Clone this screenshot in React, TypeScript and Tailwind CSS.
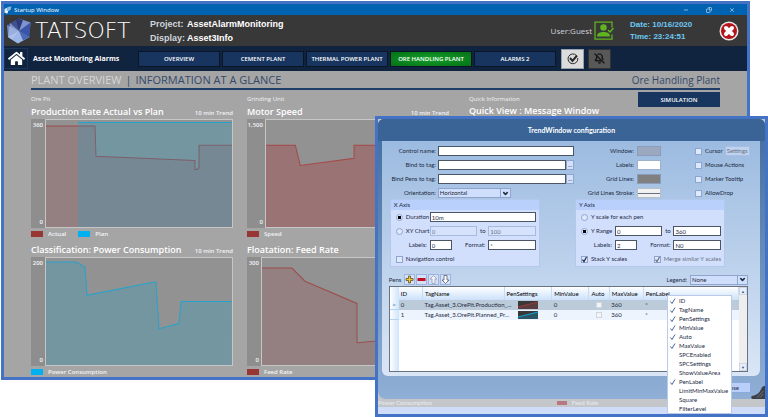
import React from "react";
import { FaHome } from "react-icons/fa";
import { BellOff, ChevronDown, Minus, Copy, X } from "lucide-react";

const tabs = ["OVERVIEW", "CEMENT PLANT", "THERMAL POWER PLANT", "ORE HANDLING PLANT", "ALARMS 2"];

const pens = [
  { id: "0", tag: "Tag.Asset_3.OrePit.Production_...", min: "0", max: "360", label: "*", line: "#9c3a3a", fill: "#5a3c3c" },
  { id: "1", tag: "Tag.Asset_3.OrePit.Planned_Pr...", min: "0", max: "360", label: "*", line: "#12a5dc", fill: "#2b5562" },
];

const menuItems = [
  { name: "ID", on: true },
  { name: "TagName", on: true },
  { name: "PenSettings", on: true },
  { name: "MinValue", on: true },
  { name: "Auto", on: true },
  { name: "MaxValue", on: true },
  { name: "SPCEnabled", on: false },
  { name: "SPCSettings", on: false },
  { name: "ShowValueArea", on: false },
  { name: "PenLabel", on: true },
  { name: "LimitMinMaxValue", on: false },
  { name: "Square", on: false },
  { name: "FilterLevel", on: false },
];

interface Series {
  points: string;
  color: string;
  opacity: number;
}

interface TrendProps {
  title: string;
  max: string;
  wideAxis?: boolean;
  series: Series[];
  legend: { name: string; color: string }[];
}

// points run left to right in a 186 x 106 plot, the area below is closed to the bottom edge
function areaOf(points: string) {
  const list = points.split(" ");
  const firstX = list[0].split(",")[0];
  const lastX = list[list.length - 1].split(",")[0];
  return `${firstX},106 ${points} ${lastX},106`;
}

function Trend({ title, max, wideAxis, series, legend }: TrendProps) {
  return (
    <section>
      <div className="flex h-4 items-center justify-between whitespace-nowrap">
        <h3 className="text-[9px] leading-none font-semibold text-white">{title}</h3>
        <span className="pt-1 text-[6px] leading-none font-semibold text-gray-100">10 min Trend</span>
      </div>
      <div className="flex h-[109px]">
        <div className={`flex flex-col items-end justify-between bg-[#8e8e8e] py-[2px] pr-[2px] text-[6px] leading-[8px] font-semibold text-gray-100 ${wideAxis ? "w-[18px]" : "w-[14px]"}`}>
          <span>{max}</span>
          <span>0</span>
        </div>
        <div className="min-w-0 flex-1 border border-[#c6c6c6] bg-[#929292]">
          <svg className="block h-full w-full" viewBox="0 0 186 106" preserveAspectRatio="none">
            {series.map((s) => (
              <g key={s.color}>
                <polygon points={areaOf(s.points)} fill={s.color} fillOpacity={s.opacity} />
                <polyline points={s.points} fill="none" stroke={s.color} strokeOpacity="0.7" strokeWidth="1" />
              </g>
            ))}
          </svg>
        </div>
      </div>
      <div className="flex h-[11px] items-center gap-3 text-[6px] leading-none font-semibold text-gray-100">
        {legend.map((item) => (
          <span key={item.name} className="flex items-center gap-[5px]">
            <i className="h-[6px] w-3" style={{ background: item.color }} />
            {item.name}
          </span>
        ))}
      </div>
    </section>
  );
}

function Logo() {
  return (
    <svg className="h-[26px] w-[25px] shrink-0" viewBox="0 0 50 52">
      <polygon points="26,26 2,14 20,4 26,1" fill="#41518f" />
      <polygon points="26,1 49,9 47,30 26,26" fill="#7d93cf" />
      <polygon points="2,14 26,26 22,50 4,38" fill="#6f8dcb" />
      <polygon points="26,26 47,38 24,51 4,38" fill="#9db6e8" />
      <polygon points="26,26 49,9 47,38" fill="#3a55a8" />
      <polygon points="8,10 26,26 12,43 4,38" fill="#b9cbee" opacity="0.55" />
      <polygon points="26,26 47,38 34,45" fill="#4d68b4" />
      <polygon points="26,1 34,4 26,26 20,4" fill="#2c3b78" />
    </svg>
  );
}

function UserIcon() {
  return (
    <svg className="h-[19px] w-[20px]" viewBox="0 0 40 38" fill="none" stroke="#5fb41f" strokeWidth="2.5">
      <path d="M36 13V2H2v34h34V27" />
      <circle cx="19" cy="13" r="6.5" fill="#5fb41f" stroke="none" />
      <path d="M6 31c0-7 6-9 13-9s13 2 13 9z" fill="#5fb41f" stroke="none" />
      <path d="M28 18l4 4 7-8" strokeWidth="3" />
    </svg>
  );
}

function ExitIcon() {
  return (
    <svg className="h-5 w-5" viewBox="0 0 40 40">
      <circle cx="20" cy="20" r="19" fill="#e8e8e8" />
      <circle cx="20" cy="20" r="16" fill="#b3151b" />
      <path d="M14 14l12 12M26 14L14 26" stroke="#fff" strokeWidth="8" strokeLinecap="round" />
    </svg>
  );
}

function AckIcon() {
  return (
    <svg className="h-3 w-3" viewBox="0 0 24 24" fill="none" stroke="#2b2b2b">
      <path d="M19 5a9.8 9.8 0 1 0 2.500 5" strokeWidth="2" />
      <path d="M6 10l5 6L20 5" strokeWidth="4" />
    </svg>
  );
}

function MainWindow() {
  return (
    <div className="mt-px mr-[18px] ml-px border-3 border-[#4472c4] bg-[#a5a5a5] font-['Open_Sans',sans-serif]">
      <div className="flex h-[11px] items-center gap-[2px] bg-[#0063b1] pr-3 text-white">
        <svg className="h-[8px] w-[8px]" viewBox="0 0 16 16">
          <path d="M1 6l6-3v9l-6 2z" fill="#cfe3f7" />
          <path d="M7 2l8-1-2 7-6 3z" fill="#8cb9e4" />
          <path d="M3 9l5 1-1 5-4-1z" fill="#fff" />
        </svg>
        <span className="text-[6px] leading-none">Startup Window</span>
        <div className="ml-auto flex items-center gap-[17px]">
          <button aria-label="Minimize"><Minus className="size-[6px]" /></button>
          <button aria-label="Restore"><Copy className="size-[6px] -scale-x-100" /></button>
          <button aria-label="Close window"><X className="size-[6px]" /></button>
        </div>
      </div>

      <header className="flex h-[31px] items-center bg-[#383838] pr-2 pl-[2px]">
        <Logo />
        <span className="ml-1 w-[115px] font-['DejaVu_Sans',sans-serif] text-[22px] leading-none font-extralight text-white">TATSOFT</span>
        <dl className="grid grid-cols-[auto_1fr] gap-x-[2px] font-['Liberation_Sans',sans-serif] text-[9px] leading-[14px] font-bold whitespace-nowrap text-white">
          <dt className="text-gray-300">Project:</dt>
          <dd>AssetAlarmMonitoring</dd>
          <dt className="text-gray-300">Display:</dt>
          <dd>Asset3Info</dd>
        </dl>
        <div className="ml-auto flex items-center gap-[2px]">
          <span className="text-[8px] leading-none text-gray-300">User:Guest</span>
          <UserIcon />
        </div>
        <div className="ml-4 w-[89px] font-['Liberation_Sans',sans-serif] text-[8px] leading-[12px] font-bold text-[#6cc8f4]">
          <p>Date: 10/16/2020</p>
          <p>Time: 23:24:51</p>
        </div>
        <button aria-label="Exit"><ExitIcon /></button>
      </header>

      <nav className="flex h-[25px] items-center bg-[#10233f] text-white">
        <button aria-label="Home" className="flex h-[21px] w-6 items-center justify-center border border-[#1b3556]">
          <FaHome className="size-[17px]" />
        </button>
        <span className="ml-[5px] w-[105px] text-[7px] leading-none font-bold whitespace-nowrap">Asset Monitoring Alarms</span>
        <div className="flex gap-[2px]">
          {tabs.map((tab) => (
            <button
              key={tab}
              className={`h-4 w-[82px] border border-[#0a1526] text-[6px] leading-none font-semibold whitespace-nowrap ${tab === "ORE HANDLING PLANT" ? "bg-radial from-[#13a02c] to-[#067015]" : "bg-[#17355e]"}`}
            >
              {tab}
            </button>
          ))}
        </div>
        <button aria-label="Acknowledge alarms" className="ml-[5px] flex h-5 w-[23px] items-center justify-center border border-gray-400 bg-[#dcdcdc]">
          <AckIcon />
        </button>
        <button aria-label="Mute alarms" className="ml-1 flex h-5 w-[23px] items-center justify-center border border-[#333] bg-[#585858] text-[#181818]">
          <BellOff className="size-[11px]" strokeWidth={3} />
        </button>
      </nav>

      <main className="px-[27px]">
        <div className="flex h-[19px] items-center justify-between border-b-2 border-[#1f3d66] whitespace-nowrap text-[#34496a]">
          <h1 className="flex gap-1 text-[11px] leading-none">
            <span className="text-[#d6d6d6]">PLANT OVERVIEW</span>
            <span>|</span>
            <span>INFORMATION AT A GLANCE</span>
          </h1>
          <h2 className="text-[10px] leading-none">Ore Handling Plant</h2>
        </div>

        <div className="grid grid-cols-[11fr_11fr_14fr] gap-x-3.5">
          <div>
            <p className="pt-[5px] text-[6px] leading-[8px] text-gray-100">Ore Pit</p>
            <div className="flex flex-col gap-[2px]">
              <Trend
                title="Production Rate Actual vs Plan"
                max="360"
                series={[
                  { points: "0,6 49,6 50,36 149,40 149,49 151,49 153,47 153,25 186,25", color: "#a03434", opacity: 0.18 },
                  { points: "32,2.5 186,2.5", color: "#00a8e0", opacity: 0.2 },
                ]}
                legend={[{ name: "Actual", color: "#983535" }, { name: "Plan", color: "#00b0f0" }]}
              />
              <Trend
                title="Classification: Power Consumption"
                max="200"
                series={[{ points: "0,4 30,4 39,9 41,37 107,24 110,24 113,70 133,65 135,43 186,43", color: "#00a8e0", opacity: 0.2 }]}
                legend={[{ name: "Power Consumption", color: "#00b0f0" }]}
              />
            </div>
          </div>
          <div>
            <p className="pt-[5px] text-[6px] leading-[8px] text-gray-100">Grinding Unit</p>
            <div className="flex flex-col gap-[2px]">
              <Trend
                title="Motor Speed"
                max="1,500"
                wideAxis
                series={[{ points: "0,25 30,25 35,45 90,38 90,25 186,25", color: "#ad2f2f", opacity: 0.3 }]}
                legend={[{ name: "Speed", color: "#983535" }]}
              />
              <Trend
                title="Floatation: Feed Rate"
                max="300"
                series={[{ points: "0,10 30,10 43,23 95,45 95,84 186,76", color: "#a03434", opacity: 0.18 }]}
                legend={[{ name: "Feed Rate", color: "#983535" }]}
              />
            </div>
          </div>
          <div className="flex items-start justify-between pl-[6px] whitespace-nowrap">
            <div>
              <p className="pt-[5px] text-[6px] leading-[8px] text-gray-100">Quick Information</p>
              <h3 className="text-[9px] leading-4 font-semibold text-white">Quick View : Message Window</h3>
            </div>
            <button className="mt-[2px] h-[15px] w-[82px] bg-[#17355e] text-[6px] leading-none font-semibold text-white">SIMULATION</button>
          </div>
        </div>
      </main>
    </div>
  );
}

const inputStyle = "h-[10px] min-w-0 border border-gray-600 bg-white px-px leading-none disabled:border-[#a9bbdd] disabled:bg-[#d6e2fc] disabled:text-gray-500";

function Check({ id, label, checked, disabled }: { id: string; label: string; checked?: boolean; disabled?: boolean }) {
  return (
    <span className={`flex items-center gap-[3px] whitespace-nowrap ${disabled ? "text-gray-500" : ""}`}>
      <span className="relative flex size-[7px]">
        <input id={id} type="checkbox" defaultChecked={checked} disabled={disabled} className="peer size-[7px] appearance-none border border-[#8ea6cf] bg-[#dfe9fd]" />
        <svg className="pointer-events-none absolute inset-0 hidden size-[7px] peer-checked:block" viewBox="0 0 14 14" fill="none" stroke="currentColor" strokeWidth="2.5">
          <path d="M3 7l3 4 5-9" />
        </svg>
      </span>
      <label htmlFor={id}>{label}</label>
    </span>
  );
}

function Radio({ id, name, label, checked }: { id: string; name: string; label: string; checked?: boolean }) {
  return (
    <span className="flex items-center gap-[3px] whitespace-nowrap">
      <input
        id={id}
        name={name}
        type="radio"
        defaultChecked={checked}
        className="size-[7px] appearance-none rounded-full border border-[#8ea6cf] bg-[#dfe9fd] checked:bg-radial checked:from-black checked:from-40% checked:to-[#dfe9fd] checked:to-50%"
      />
      <label htmlFor={id}>{label}</label>
    </span>
  );
}

function Select({ id, value, className }: { id: string; value: string; className: string }) {
  return (
    <span className={`relative flex h-[10px] border border-[#8ea6cf] bg-[#cfdefa] ${className}`}>
      <select id={id} defaultValue={value} className="w-full appearance-none pl-px leading-none">
        <option>{value}</option>
      </select>
      <span className="pointer-events-none absolute inset-y-0 right-0 flex w-[10px] items-center justify-center border-l border-[#8ea6cf]">
        <ChevronDown className="size-[7px]" strokeWidth={5} />
      </span>
    </span>
  );
}

function AxisGroup({ title, children }: { title: string; children: React.ReactNode }) {
  return (
    <fieldset className="min-w-0 flex-1 border border-[#b4c8ee] bg-[#d1dffd]">
      <legend className="float-left mb-[2px] h-[10px] w-full bg-[#bad0fc] pl-[3px] leading-[10px]">{title}</legend>
      <div className="clear-both grid grid-cols-[34px_1fr_11px_1fr] items-center gap-y-1 pr-[3px] pb-[2px] pl-[5px]">
        {children}
      </div>
    </fieldset>
  );
}

function LabelsFormat({ axis, labels, format }: { axis: string; labels: string; format: string }) {
  return (
    <>
      <label htmlFor={`${axis}-labels`} className="pr-[3px] text-right">Labels:</label>
      <span className="col-span-2 flex items-center justify-between pr-[3px]">
        <input id={`${axis}-labels`} defaultValue={labels} className={`${inputStyle} w-[22px]`} />
        <label htmlFor={`${axis}-format`}>Format:</label>
      </span>
      <input id={`${axis}-format`} defaultValue={format} className={inputStyle} />
    </>
  );
}

function PensTable() {
  return (
    <div className="flex h-[86px] border border-gray-500 bg-white">
      <div className="w-[9px] bg-linear-to-r from-white to-[#cfe4fb] pt-[13px] text-[#8db7e6]">
        <div className="h-[10px] border-b border-[#b5d4f4] text-center text-[4px] leading-[9px]">▶</div>
        <div className="h-[10px] border-b border-[#b5d4f4]" />
      </div>
      <div className="min-w-0 flex-1">
        <table className="w-full table-fixed text-left whitespace-nowrap">
          <colgroup>
            <col className="w-[7%]" />
            <col className="w-[24%]" />
            <col className="w-[14%]" />
            <col className="w-[11%]" />
            <col className="w-[6%]" />
            <col className="w-[10%]" />
            <col className="w-[28%]" />
          </colgroup>
          <thead>
            <tr className="h-[13px] bg-linear-to-b from-white to-[#cbe1fa]">
              {["ID", "TagName", "PenSettings", "MinValue", "Auto", "MaxValue", "PenLabel"].map((name) => (
                <th key={name} className="border-r border-[#c6dcf3] pl-[2px] font-normal text-black">{name}</th>
              ))}
            </tr>
          </thead>
          <tbody>
            {pens.map((pen, index) => (
              <tr key={pen.id} className={`h-[10px] ${index === 0 ? "bg-[#bccbd9]" : "bg-[#edf4fe]"}`}>
                <td className="pl-[2px]">{pen.id}</td>
                <td className="pl-[2px]">{pen.tag}</td>
                <td>
                  <svg className="mx-auto block h-2 w-5" viewBox="0 0 20 8">
                    <rect width="20" height="8" fill="#383838" />
                    <path d="M0 6L20 1V8H0z" fill={pen.fill} />
                    <path d="M0 6L20 1" stroke={pen.line} />
                  </svg>
                </td>
                <td className="pl-[2px]">{pen.min}</td>
                <td>
                  <input type="checkbox" aria-label={`Auto ${pen.id}`} className="mx-auto block size-[6px] appearance-none border border-gray-300 bg-gray-100" />
                </td>
                <td className="pl-[2px]">{pen.max}</td>
                <td className="pl-[2px]">{pen.label}</td>
              </tr>
            ))}
          </tbody>
        </table>
      </div>
      <div className="flex w-2 flex-col justify-between bg-[#eeeeee] text-center text-[4px] leading-[8px] text-slate-600">
        <button aria-label="Scroll up" className="h-2 border border-gray-300 bg-[#e4eefc] leading-[5px]">▲</button>
        <button aria-label="Scroll down" className="h-2 border border-gray-300 bg-[#e4eefc] leading-[5px]">▼</button>
      </div>
    </div>
  );
}

const toolButton = "flex h-[11px] w-[11px] items-center justify-center border border-[#9fb4dc] bg-[#d5e1fa]";

function PenToolbar() {
  return (
    <div className="flex items-center gap-px">
      <span className="mr-[2px]">Pens</span>
      <button aria-label="Add pen" className={toolButton}>
        <svg className="size-[9px]" viewBox="0 0 18 18"><path d="M7 2h4v5h5v4h-5v5H7v-5H2V7h5z" fill="#f0c530" stroke="#594d22" strokeWidth="1.5" /></svg>
      </button>
      <button aria-label="Remove pen" className={toolButton}>
        <svg className="size-[9px]" viewBox="0 0 18 18"><path d="M1 6h16v6H1z" fill="#c40d1e" /></svg>
      </button>
      <button aria-label="Move up" className={toolButton}>
        <svg className="size-[9px]" viewBox="0 0 18 18"><path d="M9 1l7 7h-4v9H6V8H2z" fill="#eef3fb" stroke="#909aab" strokeWidth="1.5" /></svg>
      </button>
      <button aria-label="Move down" className={toolButton}>
        <svg className="size-[9px]" viewBox="0 0 18 18"><path d="M9 17l7-7h-4V1H6v9H2z" fill="#fff" stroke="#4f5663" strokeWidth="1.5" /></svg>
      </button>
      <label htmlFor="legend" className="mr-[2px] ml-auto">Legend:</label>
      <Select id="legend" value="None" className="w-[58px]" />
    </div>
  );
}

function ColumnMenu() {
  return (
    <ul role="menu" className="absolute right-[33px] bottom-0 w-[65px] border border-[#b9cbe6] bg-white">
      {menuItems.map((item) => (
        <li key={item.name} role="menuitemcheckbox" aria-checked={item.on} className="flex h-[9px] items-center gap-[3px] pl-[2px]">
          <svg className="size-[6px]" viewBox="0 0 12 12" fill="none" stroke="#2f5597" strokeWidth="1.8">
            {item.on && <path d="M1 7l3 4 6-10" />}
          </svg>
          {item.name}
        </li>
      ))}
    </ul>
  );
}

function ConfigDialog() {
  return (
    <div role="dialog" aria-labelledby="dialog-title" className="absolute top-[116px] right-0 w-[51.2%] border-3 border-[#4472c4] bg-[#c4c6ca] font-['Lato',sans-serif] text-[6px] leading-[8px] text-[#1c2a3f]">
      <div className="rounded-t-md rounded-b-lg bg-linear-to-b from-[#3f6c9f] to-[#90afd6] pr-[5px] pl-1">
        <h2 id="dialog-title" className="-mr-[5px] -ml-1 flex h-[22px] items-center justify-center rounded-t-md bg-[#3a6496] text-[7px] font-bold text-white">
          TrendWindow configuration
        </h2>
        <div className="rounded-b-md bg-linear-to-b from-[#9cbbe0] to-[#dae6f6] pt-[5px] pr-3 pb-1 pl-[7px]">
          <div className="grid grid-cols-[1fr_87px_87px]">
            <div className="grid grid-cols-[47px_1fr] items-center gap-x-[2px] gap-y-1 text-right">
              <label htmlFor="control-name" className="whitespace-nowrap">Control name:</label>
              <input id="control-name" className={inputStyle} />
              <label htmlFor="bind-tag">Bind to tag:</label>
              <span className="flex">
                <input id="bind-tag" className={`${inputStyle} flex-1`} />
                <button className="w-2 border border-[#8ea6cf] bg-[#d5e1fa] text-center leading-[4px]">...</button>
              </span>
              <label htmlFor="bind-pens" className="whitespace-nowrap">Bind Pens to tag:</label>
              <span className="flex">
                <input id="bind-pens" className={`${inputStyle} flex-1`} />
                <button className="w-2 border border-[#8ea6cf] bg-[#d5e1fa] text-center leading-[4px]">...</button>
              </span>
              <label htmlFor="orientation">Orientation:</label>
              <Select id="orientation" value="Horizontal" className="w-[73px]" />
            </div>
            <div className="grid grid-cols-[1fr_24px] items-center gap-x-[3px] gap-y-1 text-right whitespace-nowrap">
              <span>Window:</span>
              <button aria-label="Window color" className="h-[10px] border border-[#8b9dba] bg-[#9ca8bf]" />
              <span>Labels:</span>
              <button aria-label="Labels color" className="h-[10px] border border-[#9fb0cc] bg-white" />
              <span>Grid Lines:</span>
              <button aria-label="Grid lines color" className="h-[10px] border border-[#8b9dba] bg-[#808080]" />
              <span>Grid Lines Stroke:</span>
              <button aria-label="Grid lines stroke" className="flex h-[10px] items-center border border-[#b7bfca] bg-[#f1f1f1]">
                <span className="h-px w-full bg-gray-500" />
              </button>
            </div>
            <div className="flex flex-col gap-1 pl-[34px]">
              <div className="flex h-[10px] items-center gap-[2px]">
                <Check id="cursor" label="Cursor" />
                <button disabled className="h-[10px] border border-[#a9bfe2] bg-[#bfd2f0] px-px leading-none text-gray-500">Settings</button>
              </div>
              <div className="flex h-[10px] items-center"><Check id="mouse" label="Mouse Actions" /></div>
              <div className="flex h-[10px] items-center"><Check id="marker" label="Marker Tooltip" /></div>
              <div className="flex h-[10px] items-center"><Check id="drop" label="AllowDrop" /></div>
            </div>
          </div>

          <div className="mt-px flex gap-[35px] pr-[23px] pl-px">
            <AxisGroup title="X Axis">
              <Radio id="duration" name="x-axis" label="Duration" checked />
              <input aria-label="Duration value" defaultValue="10m" className={`${inputStyle} col-span-3`} />
              <Radio id="xy-chart" name="x-axis" label="XY Chart" />
              <input aria-label="XY from" defaultValue="0" disabled className={inputStyle} />
              <span className="text-center">to</span>
              <input aria-label="XY to" defaultValue="100" disabled className={inputStyle} />
              <LabelsFormat axis="x" labels="0" format="*" />
              <span className="col-span-4 flex h-[10px] items-center"><Check id="navigation" label="Navigation control" /></span>
            </AxisGroup>
            <AxisGroup title="Y Axis">
              <span className="col-span-4 flex h-[10px] items-center"><Radio id="y-each" name="y-axis" label="Y scale for each pen" /></span>
              <Radio id="y-range" name="y-axis" label="Y Range" checked />
              <input aria-label="Y from" defaultValue="0" className={inputStyle} />
              <span className="text-center">to</span>
              <input aria-label="Y to" defaultValue="360" className={inputStyle} />
              <LabelsFormat axis="y" labels="2" format="N0" />
              <span className="col-span-4 flex h-[10px] items-center justify-between">
                <Check id="stack" label="Stack Y scales" checked />
                <Check id="merge" label="Merge similar Y scales" checked disabled />
              </span>
            </AxisGroup>
          </div>

          <div className="mt-[7px] mb-px">
            <PenToolbar />
          </div>
          <PensTable />
        </div>
        <div className="flex h-[23px] items-center justify-end pr-[9px]">
          <button className="h-[11px] w-[34px] border border-[#8ba9da] bg-[#b9cffa] pr-[11px] text-right leading-none">Close</button>
        </div>
      </div>
      <svg className="absolute right-0 bottom-[15px] h-[14px] w-[14px]" viewBox="0 0 28 28">
        <path d="M28 2C24 2 22 4 20 9C16 17 10 21 2 22C-1 23 0 28 5 28H28z" fill="#3b3f47" />
        <path d="M12 25L25 12M18 25L25 18" stroke="#777" strokeWidth="2" />
      </svg>
      <div className="flex h-2 items-center gap-[125px] text-gray-200">
        <span className="font-semibold">Power Consumption</span>
        <span className="flex items-center gap-[5px] font-semibold"><i className="h-1 w-[10px] bg-[#b87880]" />Feed Rate</span>
      </div>
      <div className="h-[7px] bg-[#cfdcfa]" />
      <ColumnMenu />
    </div>
  );
}

export default function App() {
  return (
    <div className="relative flow-root min-h-screen overflow-hidden bg-white">
      <MainWindow />
      <ConfigDialog />
    </div>
  );
}
